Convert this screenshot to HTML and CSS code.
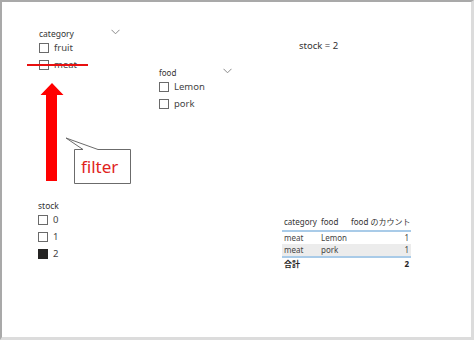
FILE: index.html
```html
<!DOCTYPE html>
<html lang="ja">
<head>
    <meta charset="UTF-8">
    <title>Report</title>
    <link rel="stylesheet" href="styles.css">
</head>
<body>
    <div class="canvas">
        <!-- slicer: category -->
        <div class="slicer slicer-category">
            <div class="slicer-head">
                <span>category</span>
                <svg class="chevron" width="9" height="6" viewBox="0 0 9 6"><path d="M0.5 0.8 L4.5 4.8 L8.5 0.8" fill="none" stroke="#8a8a8a" stroke-width="1"/></svg>
            </div>
            <div class="item"><span class="box"></span>fruit</div>
            <div class="item"><span class="box"></span>meat</div>
        </div>
        <div class="strike"></div>

        <!-- slicer: food -->
        <div class="slicer slicer-food">
            <div class="slicer-head">
                <span>food</span>
                <svg class="chevron" width="9" height="6" viewBox="0 0 9 6"><path d="M0.5 0.8 L4.5 4.8 L8.5 0.8" fill="none" stroke="#8a8a8a" stroke-width="1"/></svg>
            </div>
            <div class="item"><span class="box"></span>Lemon</div>
            <div class="item"><span class="box"></span>pork</div>
        </div>

        <div class="card-text">stock = 2</div>

        <!-- annotation -->
        <svg class="annotation" width="474" height="340" viewBox="0 0 474 340">
            <polygon points="52,83 63.5,95 57,95 57,181 46,181 46,95 40.5,95" fill="#ff0000"/>
            <path d="M74.5,149.5 L83,149.5 L66,138 L98,149.5 L130.5,149.5 L130.5,183.5 L74.5,183.5 Z" fill="#fff" stroke="#6b6b6b" stroke-width="1"/>
        </svg>
        <div class="callout-text">filter</div>

        <!-- slicer: stock -->
        <div class="slicer slicer-stock">
            <div class="slicer-head"><span>stock</span></div>
            <div class="item"><span class="box"></span>0</div>
            <div class="item"><span class="box"></span>1</div>
            <div class="item"><span class="box checked"></span>2</div>
        </div>

        <!-- table -->
        <table class="grid">
            <colgroup>
                <col class="c1"><col class="c2"><col>
            </colgroup>
            <thead>
                <tr><th>category</th><th>food</th><th class="num">food のカウント</th></tr>
            </thead>
            <tbody>
                <tr><td>meat</td><td>Lemon</td><td class="num">1</td></tr>
                <tr class="alt"><td>meat</td><td>pork</td><td class="num">1</td></tr>
            </tbody>
            <tfoot>
                <tr><td>合計</td><td></td><td class="num">2</td></tr>
            </tfoot>
        </table>
    </div>
</body>
</html>
```

FILE: styles.css
```css
* {
    box-sizing: border-box;
}
body {
    margin: 0;
    background: #fff;
    font-family: "Noto Sans", "Noto Sans CJK JP", sans-serif;
    color: #333;
}
.canvas {
    position: relative;
    width: 474px;
    height: 340px;
    border-top: 2px solid #a9a9a9;
    border-left: 2px solid #a9a9a9;
    border-right: 3px solid #dcdcdc;
    border-bottom: 3px solid #dcdcdc;
    overflow: hidden;
}

/* Slicers */
.slicer {
    position: absolute;
    font-size: 9.5px;
}
.slicer-category {
    left: 37px;
    top: 25px;
    width: 81px;
}
.slicer-food {
    left: 157px;
    top: 64px;
    width: 73px;
}
.slicer-stock {
    left: 36px;
    top: 197px;
    width: 60px;
}
.slicer-head {
    display: flex;
    justify-content: space-between;
    align-items: center;
    height: 12px;
    font-size: 8.5px;
    color: #333;
}
.slicer-food .slicer-head {
    font-size: 8px;
}
.chevron {
    margin-top: -3px;
}
.item {
    display: flex;
    align-items: center;
    height: 17px;
    color: #444;
}
.box {
    width: 10px;
    height: 10px;
    border: 1px solid #6a6a6a;
    margin-right: 5px;
    background: #fff;
}
.box.checked {
    background: #252423;
    border-color: #252423;
}
.strike {
    position: absolute;
    left: 25px;
    top: 62px;
    width: 61px;
    height: 1.5px;
    background: #e81010;
}

.card-text {
    position: absolute;
    left: 297px;
    top: 37px;
    font-size: 9.5px;
    color: #333;
}

/* Annotation */
.annotation {
    position: absolute;
    left: -2px;
    top: -2px;
}
.callout-text {
    position: absolute;
    left: 79px;
    top: 153px;
    font-size: 17px;
    color: #e0231c;
}

/* Table */
.grid {
    position: absolute;
    left: 280px;
    top: 211px;
    width: 129px;
    table-layout: fixed;
    border-collapse: collapse;
    font-size: 8px;
    color: #444;
}
.grid .c1 {
    width: 37px;
}
.grid .c2 {
    width: 30px;
}
.grid th {
    font-weight: normal;
    text-align: left;
    padding: 0 2px;
    height: 18px;
    white-space: nowrap;
    color: #333;
    border-bottom: 2px solid #a9cbe8;
}
.grid td {
    padding: 0 2px;
    height: 12px;
    line-height: 12px;
    white-space: nowrap;
}
.grid .num {
    text-align: right;
}
.grid tr.alt td {
    background: #ececec;
    border-bottom: 2px solid #a9cbe8;
}
.grid tfoot td {
    font-weight: bold;
    color: #252423;
    height: 12px;
}
```
